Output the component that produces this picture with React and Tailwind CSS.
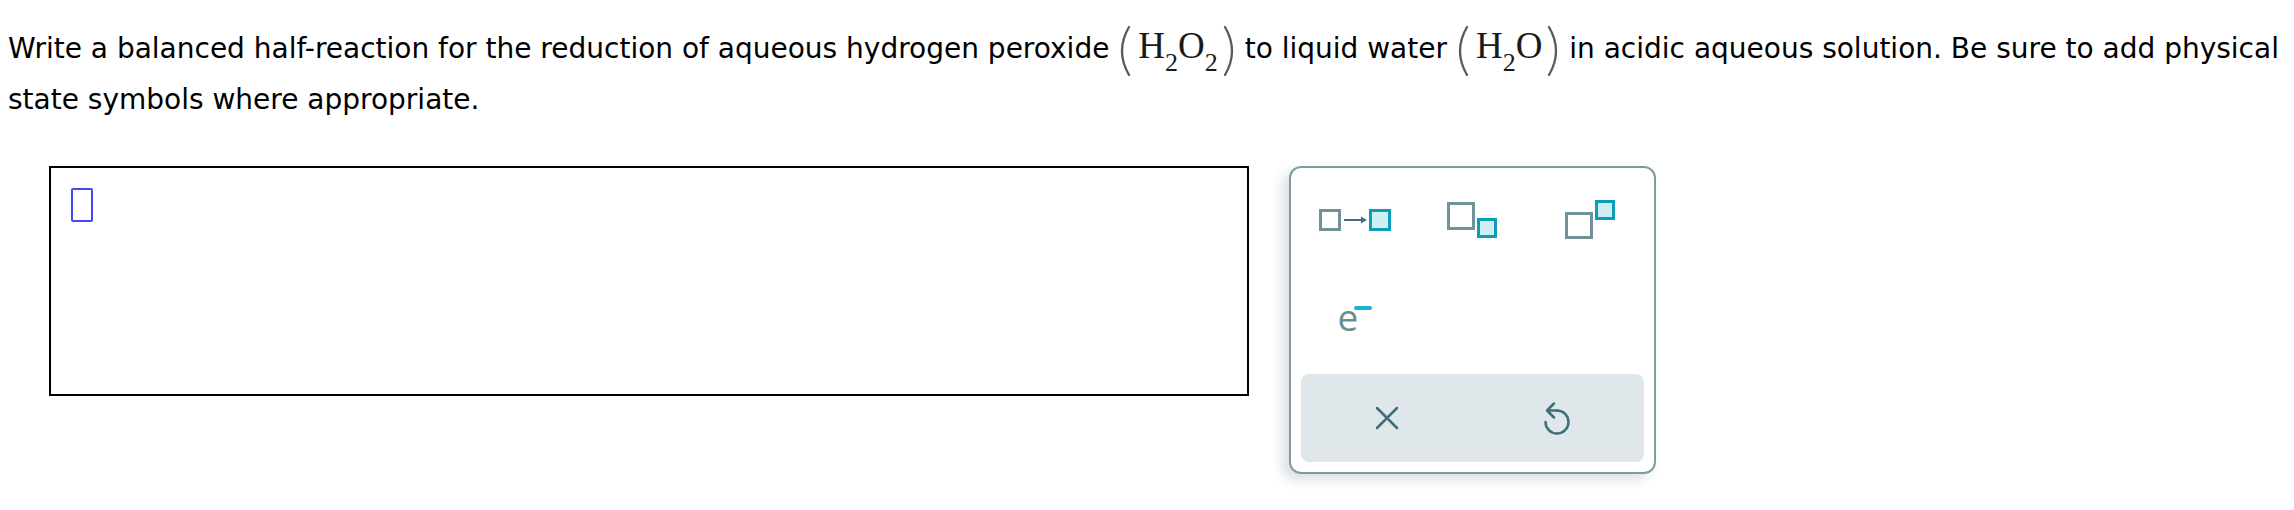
import React from 'react';

const Paren = ({ right }) => (
  <svg
    width="14"
    height="50"
    viewBox="0 0 14 50"
    className="inline-block align-[-18px]"
  >
    <path
      d={right ? 'M3 1 Q17 25 3 49' : 'M11 1 Q-3 25 11 49'}
      fill="none"
      stroke="#5a5a5a"
      strokeWidth="2.3"
      strokeLinecap="round"
    />
  </svg>
);

const Formula = ({ parts }) => (
  <span className="leading-none whitespace-nowrap">
    <Paren />
    <span className="font-['Liberation_Serif','Times_New_Roman',serif] text-[37px] text-[#1a1a1a] ml-[6px] mr-[4px]">
      {parts.map((p, i) =>
        p.sub ? (
          <span key={i} className="text-[26px] align-[-13px]">
            {p.text}
          </span>
        ) : (
          <span key={i}>{p.text}</span>
        )
      )}
    </span>
    <Paren right />
  </span>
);

const PaletteCell = ({ children }) => (
  <button className="flex items-center justify-center">{children}</button>
);

export default function App() {
  return (
    <div className="w-[2294px] h-[510px] bg-white font-['DejaVu_Sans',Verdana,sans-serif] text-black">
      {/* Question text */}
      <p className="pl-[8px] pt-[25px] text-[28px] leading-[48px]">
        Write a balanced half-reaction for the reduction of aqueous hydrogen peroxide{' '}
        <Formula
          parts={[
            { text: 'H' },
            { text: '2', sub: true },
            { text: 'O' },
            { text: '2', sub: true },
          ]}
        />{' '}
        to liquid water{' '}
        <Formula parts={[{ text: 'H' }, { text: '2', sub: true }, { text: 'O' }]} /> in acidic
        aqueous solution. Be sure to add physical state symbols where appropriate.
      </p>

      <div className="flex items-start mt-[42px] pl-[49px]">
        {/* Answer box */}
        <div className="w-[1200px] h-[230px] border-2 border-black p-[20px]">
          <div className="w-[22px] h-[34px] border-2 border-[#4646ff] rounded-[2px]" />
        </div>

        {/* Palette */}
        <div className="ml-[40px] w-[367px] h-[308px] rounded-[12px] border-2 border-[#7f9ca4] bg-white px-[5px] pt-[4px] pb-[10px] flex flex-col shadow-[-7px_6px_12px_rgba(40,60,70,0.16)]">
          <div className="grid grid-cols-3 grid-rows-[96px_96px]">
            <PaletteCell>
              <svg width="72" height="22" viewBox="0 0 72 22">
                <rect x="1.5" y="1.5" width="19" height="19" fill="#fff" stroke="#71929b" strokeWidth="3" />
                <line x1="25" y1="11" x2="44" y2="11" stroke="#44707b" strokeWidth="2" />
                <polygon points="42,7.5 48,11 42,14.5" fill="#44707b" />
                <rect x="51.5" y="1.5" width="19" height="19" fill="#cdeef3" stroke="#0b9cb8" strokeWidth="3" />
              </svg>
            </PaletteCell>
            <PaletteCell>
              <svg width="50" height="36" viewBox="0 0 50 36">
                <rect x="1.5" y="1.5" width="25" height="25" fill="#fff" stroke="#71929b" strokeWidth="3" />
                <rect x="31.5" y="17.5" width="17" height="17" fill="#cdeef3" stroke="#0b9cb8" strokeWidth="3" />
              </svg>
            </PaletteCell>
            <PaletteCell>
              <svg width="50" height="40" viewBox="0 0 50 40">
                <rect x="1.5" y="13.5" width="25" height="24" fill="#fff" stroke="#71929b" strokeWidth="3" />
                <rect x="31.5" y="1.5" width="17" height="17" fill="#cdeef3" stroke="#0b9cb8" strokeWidth="3" />
              </svg>
            </PaletteCell>
            <PaletteCell>
              <span className="flex items-start">
                <span className="font-['Open_Sans',sans-serif] text-[37px] leading-none text-[#6a8f99]">e</span>
                <span className="mt-[8px] -ml-[4px] w-[18px] h-[4px] rounded-full bg-[#17b3d0]" />
              </span>
            </PaletteCell>
            <div />
            <div />
          </div>

          <div className="mt-[10px] mx-[5px] h-[88px] rounded-[8px] bg-[#e0e7ea] grid grid-cols-2 items-center justify-items-center">
            <button>
              <svg width="24" height="24" viewBox="0 0 24 24">
                <path d="M2 2 L22 22 M22 2 L2 22" stroke="#3e6e79" strokeWidth="2.5" strokeLinecap="round" />
              </svg>
            </button>
            <button>
              <svg width="30" height="36" viewBox="0 0 30 36">
                <path
                  d="M14 10.5 A11.5 11.5 0 1 1 2.5 22"
                  fill="none"
                  stroke="#3e6e79"
                  strokeWidth="2.5"
                  strokeLinecap="round"
                />
                <path
                  d="M14 10.5 H4 M11 3.5 L4 10.5 L11 17.5"
                  fill="none"
                  stroke="#3e6e79"
                  strokeWidth="2.5"
                  strokeLinecap="round"
                  strokeLinejoin="round"
                />
              </svg>
            </button>
          </div>
        </div>
      </div>
    </div>
  );
}
